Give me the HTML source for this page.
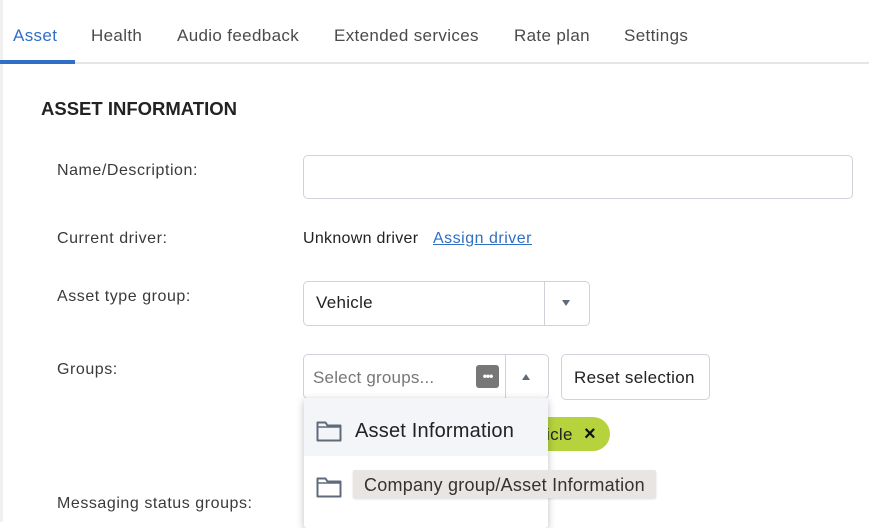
<!DOCTYPE html>
<html><head><style>
body{margin:0;width:869px;height:522px;overflow:hidden;background:#fff;font-family:"Liberation Sans",Arial,sans-serif;position:relative;color:#222}
.a{position:absolute;white-space:nowrap}
.tab{position:absolute;top:26px;font-size:17px;color:#4a4a4a;letter-spacing:0.35px}
.lbl{position:absolute;left:57px;font-size:16px;color:#3a3a3a;letter-spacing:0.55px}
.box{position:absolute;border:1px solid #cfd2d8;border-radius:5px;background:#fff;box-sizing:border-box}
.folder{position:absolute;width:26px;height:22px}
</style></head><body>
<div class="a" style="left:0;top:0;width:3px;height:522px;background:#f0f0f0"></div>
<div class="tab" style="left:13px;color:#2f6fc6">Asset</div>
<div class="tab" style="left:91px">Health</div>
<div class="tab" style="left:177px">Audio feedback</div>
<div class="tab" style="left:334px">Extended services</div>
<div class="tab" style="left:514px">Rate plan</div>
<div class="tab" style="left:624px">Settings</div>
<div class="a" style="left:0;top:62px;width:869px;height:2px;background:#e3e5e9"></div>
<div class="a" style="left:0;top:60px;width:75px;height:4px;background:#2f6fc6"></div>
<div class="a" style="left:41px;top:98px;font-size:18.5px;font-weight:bold;color:#222">ASSET INFORMATION</div>
<div class="lbl" style="top:162px">Name/Description:</div>
<div class="lbl" style="top:230px">Current driver:</div>
<div class="lbl" style="top:288px">Asset type group:</div>
<div class="lbl" style="top:361px">Groups:</div>
<div class="lbl" style="top:495px">Messaging status groups:</div>
<div class="box" style="left:303px;top:155px;width:550px;height:44px"></div>
<div class="a" style="left:303px;top:230px;font-size:16px;color:#222;letter-spacing:0.3px">Unknown driver</div>
<div class="a" style="left:433px;top:230px;font-size:16px;color:#2f6fc6;text-decoration:underline;letter-spacing:0.5px">Assign driver</div>
<div class="box" style="left:303px;top:281px;width:287px;height:45px"></div>
<div class="a" style="left:544px;top:282px;width:1px;height:43px;background:#cfd2d8"></div>
<div class="a" style="left:316px;top:293px;font-size:17px;color:#222;letter-spacing:0.3px">Vehicle</div>
<div class="a" style="left:562px;top:300px;width:0;height:0;border-left:4px solid transparent;border-right:4px solid transparent;border-top:6px solid #5f6b7a"></div>
<div class="box" style="left:303px;top:354px;width:246px;height:45px"></div>
<div class="a" style="left:505px;top:355px;width:1px;height:43px;background:#cfd2d8"></div>
<div class="a" style="left:313px;top:368px;font-size:17px;color:#777;letter-spacing:0.2px">Select groups...</div>
<div class="a" style="left:476px;top:365px;width:23px;height:23px;background:#777;border-radius:3px;color:#fff;font-size:12px;text-align:center;line-height:22px;font-weight:bold;letter-spacing:-1px">•••</div>
<div class="a" style="left:522px;top:374px;width:0;height:0;border-left:4px solid transparent;border-right:4px solid transparent;border-bottom:6px solid #5f6b7a"></div>
<div class="box" style="left:561px;top:354px;width:149px;height:46px"></div>
<div class="a" style="left:574px;top:368px;font-size:17px;color:#222;letter-spacing:0.3px">Reset selection</div>
<div class="a" style="left:520px;top:417px;width:90px;height:34px;background:#b6d33e;border-radius:17px"></div>
<div class="a" style="left:546px;top:425px;font-size:17px;color:#222;letter-spacing:0.3px">icle</div>
<div class="a" style="left:584px;top:423px;font-size:20px;font-weight:bold;color:#111">×</div>
<div class="a" style="left:304px;top:398px;width:244px;height:130px;background:#fff;box-shadow:0 2px 8px rgba(0,0,0,0.25);border-radius:3px"></div>
<div class="a" style="left:304px;top:398px;width:244px;height:58px;background:#f4f5f8"></div>
<svg class="folder" style="left:316px;top:420px" viewBox="0 0 26 22"><path d="M1.5 2.5h8l2 3h13v15h-23z" fill="none" stroke="#5f6b7a" stroke-width="2" stroke-linejoin="round"/><path d="M1.5 7h23" stroke="#5f6b7a" stroke-width="1.5"/></svg>
<div class="a" style="left:355px;top:420px;font-size:20px;color:#222;letter-spacing:0.2px">Asset Information</div>
<svg class="folder" style="left:316px;top:476px" viewBox="0 0 26 22"><path d="M1.5 2.5h8l2 3h13v15h-23z" fill="none" stroke="#5f6b7a" stroke-width="2" stroke-linejoin="round"/><path d="M1.5 7h23" stroke="#5f6b7a" stroke-width="1.5"/></svg>
<div class="a" style="left:353px;top:470px;width:303px;height:28px;background:#e9e5e3;box-shadow:0 1px 2px rgba(0,0,0,0.15);border-radius:2px"></div>
<div class="a" style="left:364px;top:475px;font-size:18px;color:#333;letter-spacing:0.25px">Company group/Asset Information</div>
</body></html>
